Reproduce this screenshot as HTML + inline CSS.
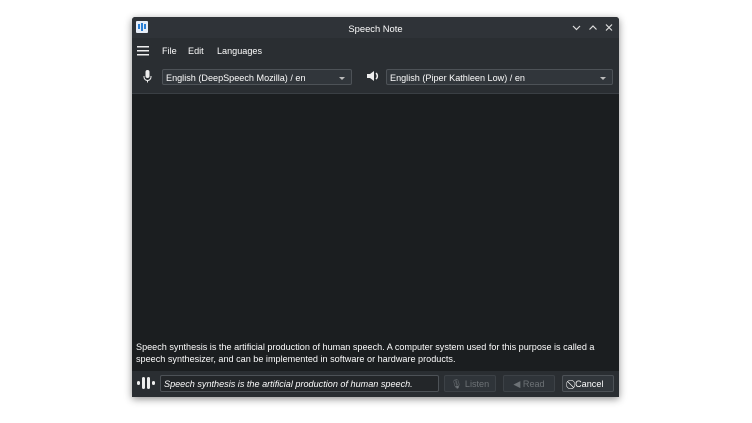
<html><head><style>
body{margin:0;width:752px;height:423px;background:#fff;position:relative;font-family:"Liberation Sans","DejaVu Sans",sans-serif;font-size:9.1px;color:#fcfcfc;overflow:hidden}
.win{position:absolute;left:132px;top:17px;width:487px;height:380px;background:#2a2e32;box-shadow:0 2px 8px rgba(0,0,0,.45);border-radius:3px 3px 0 0;overflow:hidden}
.ab{position:absolute}
.combo{position:absolute;height:16px;background:#31363b;border:1px solid #4d5257;border-radius:2px;box-sizing:border-box;line-height:16px;padding-left:3px}
.dd:after{content:"";position:absolute;right:6px;top:7px;border-left:3px solid transparent;border-right:3px solid transparent;border-top:3px solid #bbb}
.btn{position:absolute;top:358px;height:17px;border:1px solid #3d4247;background:#2f3439;border-radius:2px;box-sizing:border-box;line-height:17px;text-align:center;color:#6d7276}
</style></head><body>
<div class="win">
 <div class="ab" style="left:0;top:0;width:487px;height:21px;background:#2f3338"></div>
 <div class="ab" style="left:4px;top:4px;width:12px;height:12px;background:#e8eef8;border-radius:1px"></div>
 <div class="ab" style="left:6px;top:7px;width:2px;height:5px;background:#2a7fd4"></div>
 <div class="ab" style="left:9px;top:6px;width:2px;height:8px;background:#2a7fd4"></div>
 <div class="ab" style="left:12px;top:7px;width:2px;height:5px;background:#2a7fd4"></div>
 <div class="ab" style="left:0;top:6px;width:487px;text-align:center;font-size:9.4px">Speech Note</div>
 <svg class="ab" style="left:439px;top:6px" width="45" height="12" stroke="#ddd" stroke-width="1.2" fill="none"><path d="M2 3l3.5 3.5L9 3M18.5 6.5L22 3l3.5 3.5M35 1.5l6 6M41 1.5l-6 6"/></svg>
 <svg class="ab" style="left:5px;top:28px" width="13" height="12" fill="#eee"><rect y="1" width="12" height="1.5"/><rect y="5" width="12" height="1.5"/><rect y="9" width="12" height="1.5"/></svg>
 <div class="ab" style="left:30px;top:29px">File</div>
 <div class="ab" style="left:56px;top:29px">Edit</div>
 <div class="ab" style="left:85px;top:29px">Languages</div>
 <svg class="ab" style="left:11px;top:53px" width="10" height="13" fill="#eee"><rect x="2.5" y="0" width="4" height="8" rx="2"/><path d="M1 6v1a3.5 3.5 0 0 0 7 0V6" stroke="#eee" fill="none"/><rect x="4" y="10" width="1" height="2.5"/></svg>
 <div class="combo dd" style="left:30px;top:52px;width:190px">English (DeepSpeech Mozilla) / en</div>
 <svg class="ab" style="left:234px;top:53px" width="14" height="12" fill="#eee"><path d="M1 4h3l4-3v10l-4-3H1z"/><path d="M10 3a4 4 0 0 1 0 6" stroke="#eee" fill="none" stroke-width="1.5"/></svg>
 <div class="combo dd" style="left:254px;top:52px;width:227px">English (Piper Kathleen Low) / en</div>
 <div class="ab" style="left:0;top:76px;width:487px;height:277px;background:#1b1e20;border-top:1px solid #3a3f44"></div>
 <div class="ab" style="left:4px;top:324px;width:470px;line-height:12px">Speech synthesis is the artificial production of human speech. A computer system used for this purpose is called a speech synthesizer, and can be implemented in software or hardware products.</div>
 <svg class="ab" style="left:5px;top:359px" width="18" height="14" fill="#eee"><rect x="0" y="5" width="3" height="4" rx="1.5"/><rect x="5" y="1" width="3" height="12" rx="1.5"/><rect x="10" y="1" width="3" height="12" rx="1.5"/><rect x="15" y="5" width="3" height="4" rx="1.5"/></svg>
 <div class="combo" style="left:28px;top:358px;width:279px;height:17px;font-style:italic;background:#232629;line-height:17px">Speech synthesis is the artificial production of human speech.</div>
 <div class="btn" style="left:312px;width:52px">🎙 Listen</div>
 <div class="btn" style="left:371px;width:52px">◀ Read</div>
 <div class="btn" style="left:430px;width:52px;color:#fcfcfc;border-color:#4d5257;background:#31363b">⃠ Cancel</div>
</div>
</body></html>
